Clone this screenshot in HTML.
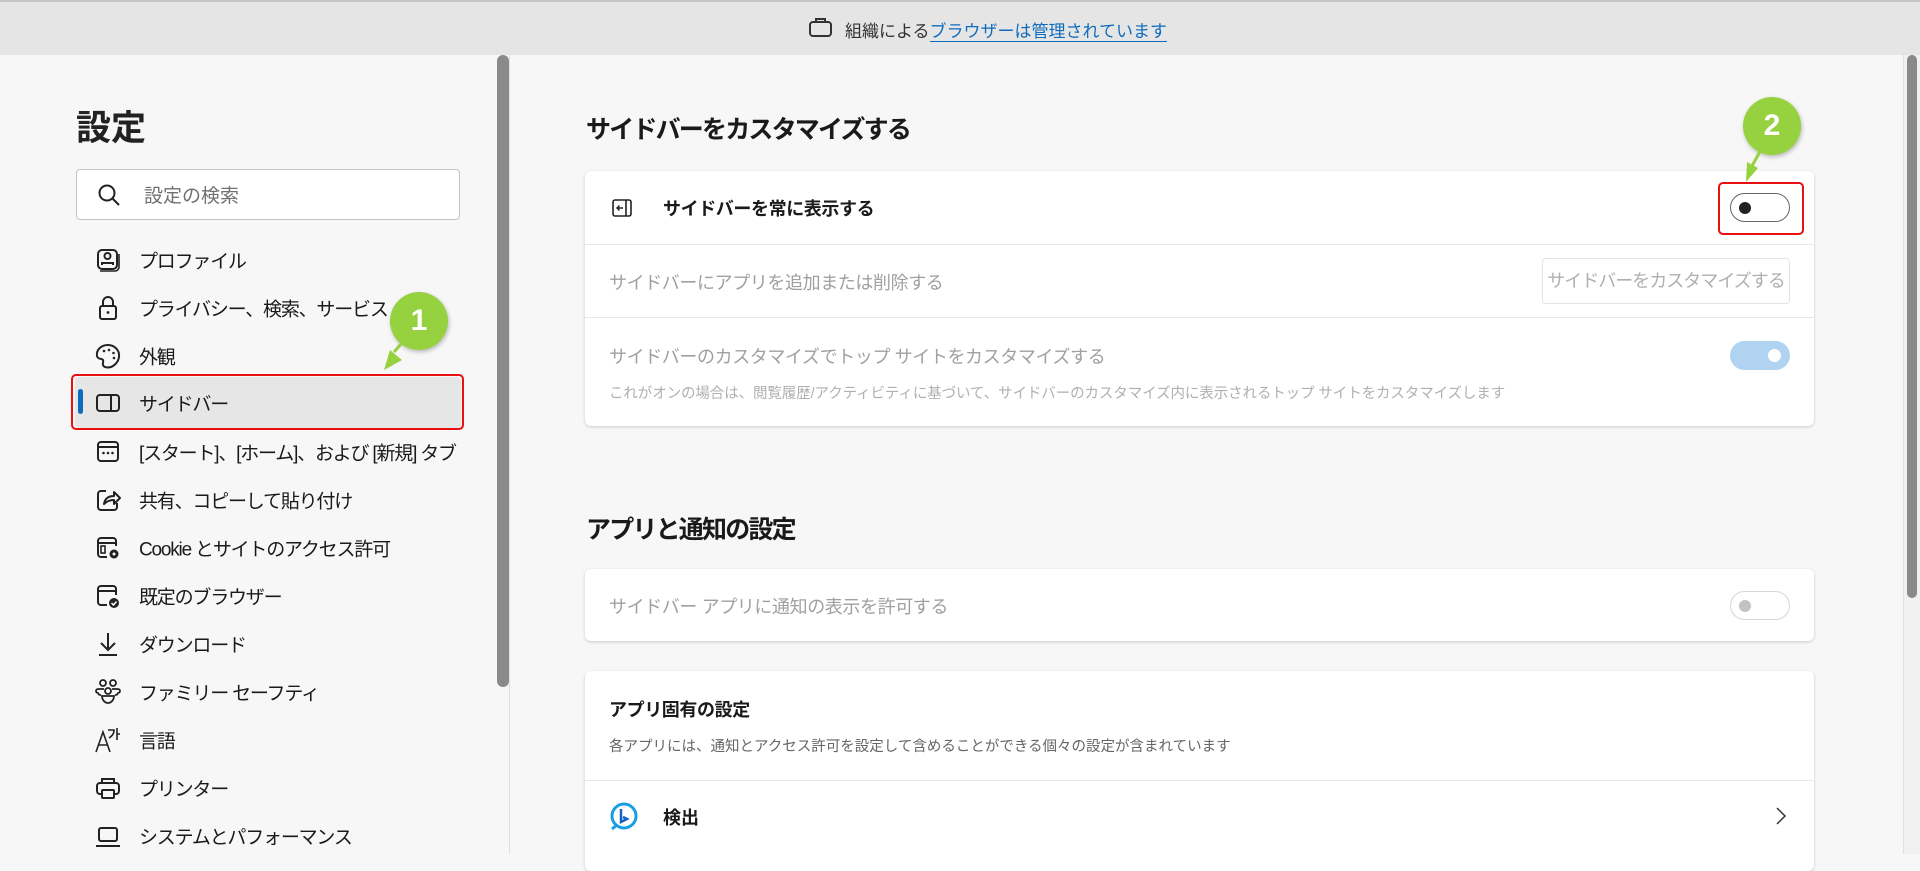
<!DOCTYPE html>
<html><head><meta charset="utf-8"><style>
*{margin:0;padding:0;box-sizing:border-box}
body{width:1920px;height:854px;overflow:hidden;background:#f7f7f7;font-family:"Liberation Sans","Noto Sans CJK JP",sans-serif;color:#1a1a1a;position:relative}
.abs{position:absolute}
.top{left:0;top:0;width:1920px;height:55px;background:#e5e5e5;border-top:2px solid #c4c4c4}
.top .t{left:845px;top:15px;font-size:17px;color:#333;white-space:nowrap}
.top a{color:#0f6cbd;text-decoration:none;border-bottom:1.5px solid #0f6cbd}
.nav{font-size:19px;color:#1a1a1a;white-space:nowrap;letter-spacing:-1.2px}
.ni{position:absolute;left:139px;transform:translateY(-50%)}
.ic{position:absolute;left:94px;width:28px;height:28px;transform:translateY(-50%)}
.card{position:absolute;left:585px;width:1229px;background:#fff;border-radius:6px;box-shadow:0 1px 3px rgba(0,0,0,.18)}
.sep{position:absolute;left:0;right:0;height:1px;background:#e6e6e6}
.tog{position:absolute;width:60px;height:29px;border-radius:15px}
.h2{position:absolute;left:586px;font-size:25px;font-weight:bold;white-space:nowrap;letter-spacing:-1.8px}
.badge{position:absolute;width:58px;height:58px;border-radius:50%;background:#96d13f;color:#fff;font-size:30px;font-weight:bold;text-align:center;line-height:58px;box-shadow:1px 2px 4px rgba(0,0,0,.25)}
</style></head><body>
<div class="abs top">
 <svg class="abs" style="left:808px;top:14px" width="26" height="22" viewBox="0 0 26 22"><rect x="2" y="6" width="21" height="14" rx="3" fill="none" stroke="#333" stroke-width="2"/><path d="M8 6V3h9v3" fill="none" stroke="#333" stroke-width="2"/></svg>
 <div class="abs t">組織による<a>ブラウザーは管理されています</a></div>
</div>
<!-- left -->
<div class="abs" style="left:509px;top:55px;width:1px;height:799px;background:#e0e0e0"></div>
<div class="abs" style="left:497px;top:55px;width:12px;height:632px;background:#8a8a8a;border-radius:6px"></div>
<div class="abs" style="left:76px;top:100px;font-size:35px;font-weight:bold;color:#222">設定</div>
<div class="abs" style="left:76px;top:169px;width:384px;height:51px;border:1px solid #c4c4c4;border-radius:4px;background:#fff"></div>
<svg class="abs" style="left:97px;top:183px" width="24" height="24" viewBox="0 0 24 24"><circle cx="10" cy="10" r="7.5" fill="none" stroke="#222" stroke-width="2"/><path d="M15.5 15.5L22 22" stroke="#222" stroke-width="2"/></svg>
<div class="abs" style="left:144px;top:181px;font-size:19px;color:#707070">設定の検索</div>

<div class="abs" style="left:75px;top:377px;width:386px;height:51px;background:#e6e6e6;border-radius:4px"></div>
<div class="abs" style="left:78px;top:389px;width:5px;height:25px;background:#0f6cbd;border-radius:3px"></div>
<div class="abs" style="left:71px;top:374px;width:393px;height:56px;border:2px solid #e81010;border-radius:5px"></div>

<div class="nav">
<svg class="ic" style="top:260px" viewBox="0 0 28 28"><rect x="4" y="4" width="19" height="19" rx="4" fill="none" stroke="#222" stroke-width="2"/><circle cx="13.5" cy="10" r="3" fill="none" stroke="#222" stroke-width="2"/><path d="M8 19v-2h11v2" fill="none" stroke="#222" stroke-width="2"/><path d="M6 25h15a4 4 0 0 0 4-4V8" fill="none" stroke="#222" stroke-width="1.6"/></svg>
<div class="ni" style="top:260px">プロファイル</div>
<svg class="ic" style="top:308px" viewBox="0 0 28 28"><rect x="6" y="12" width="16" height="13" rx="2" fill="none" stroke="#222" stroke-width="2"/><path d="M9 12V8a5 5 0 0 1 10 0v4" fill="none" stroke="#222" stroke-width="2"/><circle cx="14" cy="18.5" r="1.4" fill="#222"/></svg>
<div class="ni" style="top:308px">プライバシー、検索、サービス</div>
<svg class="ic" style="top:356px" viewBox="0 0 28 28"><path d="M14 3C7 3 2 8 3 14c1 4 5 2 6 4s-2 5 2 7c6 2 13-3 14-10S20 3 14 3z" fill="none" stroke="#222" stroke-width="2"/><circle cx="10" cy="9" r="1.3" fill="#222"/><circle cx="15" cy="8" r="1.3" fill="#222"/><circle cx="19.5" cy="11" r="1.3" fill="#222"/><circle cx="20" cy="16" r="1.3" fill="#222"/></svg>
<div class="ni" style="top:356px">外観</div>
<svg class="ic" style="top:403px" viewBox="0 0 28 28"><rect x="3" y="6" width="22" height="16" rx="3" fill="none" stroke="#222" stroke-width="2"/><path d="M17 6v16" stroke="#222" stroke-width="2"/></svg>
<div class="ni" style="top:403px">サイドバー</div>
<svg class="ic" style="top:452px" viewBox="0 0 28 28"><rect x="4" y="4" width="20" height="19" rx="3" fill="none" stroke="#222" stroke-width="2"/><path d="M4 9h20" stroke="#222" stroke-width="2"/><circle cx="9.5" cy="15" r="1.3" fill="#222"/><circle cx="14" cy="15" r="1.3" fill="#222"/><circle cx="18.5" cy="15" r="1.3" fill="#222"/></svg>
<div class="ni" style="top:452px">[スタート]、[ホーム]、および [新規] タブ</div>
<svg class="ic" style="top:500px" viewBox="0 0 28 28"><path d="M12 5H7a3 3 0 0 0-3 3v13a3 3 0 0 0 3 3h13a3 3 0 0 0 3-3v-4" fill="none" stroke="#222" stroke-width="2"/><path d="M10 18c1-6 5-8 10-8V6l6 6-6 6v-4c-4 0-7 1-10 4z" fill="none" stroke="#222" stroke-width="2" stroke-linejoin="round"/></svg>
<div class="ni" style="top:500px">共有、コピーして貼り付け</div>
<svg class="ic" style="top:548px" viewBox="0 0 28 28"><path d="M13 23H7a3 3 0 0 1-3-3V7a3 3 0 0 1 3-3h12a3 3 0 0 1 3 3v5" fill="none" stroke="#222" stroke-width="2"/><path d="M4 9h18" stroke="#222" stroke-width="2"/><rect x="7" y="12" width="4" height="7" fill="none" stroke="#222" stroke-width="1.6"/><circle cx="20" cy="20" r="4.5" fill="#222"/><circle cx="20" cy="20" r="1.5" fill="#f7f7f7"/></svg>
<div class="ni" style="top:548px">Cookie とサイトのアクセス許可</div>
<svg class="ic" style="top:596px" viewBox="0 0 28 28"><path d="M13 23H7a3 3 0 0 1-3-3V7a3 3 0 0 1 3-3h12a3 3 0 0 1 3 3v6" fill="none" stroke="#222" stroke-width="2"/><path d="M4 9h18" stroke="#222" stroke-width="2"/><circle cx="20" cy="21" r="5" fill="#222"/><path d="M17.5 21l2 2 3-3.5" fill="none" stroke="#fff" stroke-width="1.5"/></svg>
<div class="ni" style="top:596px">既定のブラウザー</div>
<svg class="ic" style="top:644px" viewBox="0 0 28 28"><path d="M14 3v17M7 13l7 7 7-7M5 25h18" fill="none" stroke="#222" stroke-width="2"/></svg>
<div class="ni" style="top:644px">ダウンロード</div>
<svg class="ic" style="top:692px" viewBox="0 0 28 28"><circle cx="9" cy="5" r="3" fill="none" stroke="#222" stroke-width="1.8"/><circle cx="19" cy="5" r="3" fill="none" stroke="#222" stroke-width="1.8"/><circle cx="14" cy="13" r="3" fill="none" stroke="#222" stroke-width="1.8"/><path d="M8 18c0 4 3 7 6 7s6-3 6-7zM10 11H4a2 2 0 0 0 0 4 3 3 0 0 0 3 2M18 11h6a2 2 0 0 1 0 4 3 3 0 0 1-3 2" fill="none" stroke="#222" stroke-width="1.8"/></svg>
<div class="ni" style="top:692px">ファミリー セーフティ</div>
<svg class="ic" style="top:740px" viewBox="0 0 28 28"><path d="M2 26L9 6l7 20M5 19h9" fill="none" stroke="#222" stroke-width="1.6"/><path d="M14 4h6c0 4-2 6-5 8M23 2v12M23 8h3" fill="none" stroke="#222" stroke-width="1.6"/></svg>
<div class="ni" style="top:740px">言語</div>
<svg class="ic" style="top:788px" viewBox="0 0 28 28"><path d="M8 9V5h12v4" fill="none" stroke="#222" stroke-width="2"/><rect x="3" y="9" width="22" height="11" rx="3" fill="none" stroke="#222" stroke-width="2"/><rect x="8" y="16" width="12" height="8" rx="1" fill="#f7f7f7" stroke="#222" stroke-width="2"/></svg>
<div class="ni" style="top:788px">プリンター</div>
<svg class="ic" style="top:836px" viewBox="0 0 28 28"><rect x="5" y="6" width="18" height="13" rx="2" fill="none" stroke="#222" stroke-width="2"/><path d="M2 24h24" stroke="#222" stroke-width="2"/></svg>
<div class="ni" style="top:836px">システムとパフォーマンス</div>
</div>

<div class="badge" style="left:390px;top:292px">1</div>
<svg class="abs" style="left:378px;top:336px" width="40" height="40"><path d="M30 0L16 16" stroke="#96d13f" stroke-width="3"/><path d="M6 34L12 14L24 24z" fill="#96d13f"/></svg>

<!-- right -->
<div class="abs" style="left:1903px;top:55px;width:17px;height:799px;background:#f1f1f1;border-left:1px solid #e0e0e0"></div>
<div class="abs" style="left:1907px;top:55px;width:10px;height:543px;background:#8a8a8a;border-radius:5px"></div>

<div class="h2" style="top:110px">サイドバーをカスタマイズする</div>
<div class="card" style="top:171px;height:255px">
 <svg class="abs" style="left:26px;top:26px" width="22" height="22" viewBox="0 0 22 22"><rect x="2" y="3" width="18" height="16" rx="2" fill="none" stroke="#222" stroke-width="1.6"/><path d="M15 3v16" stroke="#222" stroke-width="1.6"/><path d="M12 11H6M8.5 8.5L6 11l2.5 2.5" fill="none" stroke="#222" stroke-width="1.4"/></svg>
 <div class="abs" style="left:78px;top:24px;font-size:18px;font-weight:bold;white-space:nowrap;letter-spacing:-0.4px">サイドバーを常に表示する</div>
 <div class="tog" style="left:1145px;top:22px;border:1px solid #666;background:#fff"><div class="abs" style="left:8px;top:8px;width:12px;height:12px;border-radius:50%;background:#222"></div></div>
 <div class="sep" style="top:73px"></div>
 <div class="abs" style="left:24px;top:98px;font-size:18px;color:#a0a0a0;white-space:nowrap;letter-spacing:-0.4px">サイドバーにアプリを追加または削除する</div>
 <div class="abs" style="left:957px;top:87px;width:248px;height:46px;border:1px solid #e4e4e4;border-radius:4px;font-size:18px;color:#b0b0b0;text-align:center;line-height:44px;white-space:nowrap;letter-spacing:-1px">サイドバーをカスタマイズする</div>
 <div class="sep" style="top:146px"></div>
 <div class="abs" style="left:24px;top:172px;font-size:18px;color:#a0a0a0;white-space:nowrap;letter-spacing:-0.4px">サイドバーのカスタマイズでトップ サイトをカスタマイズする</div>
 <div class="tog" style="left:1145px;top:170px;background:#afd3f0"><div class="abs" style="left:38px;top:8px;width:13px;height:13px;border-radius:50%;background:#fff"></div></div>
 <div class="abs" style="left:24px;top:211px;font-size:14.5px;color:#b0b0b0;white-space:nowrap;letter-spacing:-0.1px">これがオンの場合は、閲覧履歴/アクティビティに基づいて、サイドバーのカスタマイズ内に表示されるトップ サイトをカスタマイズします</div>
</div>
<div class="abs" style="left:1718px;top:182px;width:86px;height:53px;border:2px solid #e81010;border-radius:5px"></div>
<div class="badge" style="left:1743px;top:97px">2</div>
<svg class="abs" style="left:1744px;top:148px" width="30" height="34"><path d="M18 0L8 18" stroke="#96d13f" stroke-width="3"/><path d="M2 34L3 14L14 20z" fill="#96d13f"/></svg>

<div class="h2" style="top:510px">アプリと通知の設定</div>
<div class="card" style="top:569px;height:72px">
 <div class="abs" style="left:24px;top:24px;font-size:18px;color:#a0a0a0;white-space:nowrap;letter-spacing:-0.4px">サイドバー アプリに通知の表示を許可する</div>
 <div class="tog" style="left:1145px;top:22px;border:1px solid #d6d6d6;background:#fff"><div class="abs" style="left:8px;top:8px;width:12px;height:12px;border-radius:50%;background:#c2c2c2"></div></div>
</div>
<div class="card" style="top:671px;height:200px">
 <div class="abs" style="left:24px;top:25px;font-size:18px;font-weight:bold;white-space:nowrap;letter-spacing:-0.4px">アプリ固有の設定</div>
 <div class="abs" style="left:24px;top:64px;font-size:14.5px;color:#666;white-space:nowrap">各アプリには、通知とアクセス許可を設定して含めることができる個々の設定が含まれています</div>
 <div class="sep" style="top:109px"></div>
 <svg class="abs" style="left:24px;top:130px" width="30" height="30" viewBox="0 0 30 30"><circle cx="15" cy="15" r="12" fill="none" stroke="#1b9de2" stroke-width="3"/><path d="M3 28l5-4" stroke="#1b9de2" stroke-width="3"/><path d="M12 8v13l6-3-4-2" fill="none" stroke="#1460c4" stroke-width="2.5"/></svg>
 <div class="abs" style="left:78px;top:133px;font-size:18px;font-weight:bold">検出</div>
 <svg class="abs" style="left:1190px;top:135px" width="12" height="20"><path d="M2 2l8 8-8 8" fill="none" stroke="#333" stroke-width="1.5"/></svg>
</div>
</body></html>
